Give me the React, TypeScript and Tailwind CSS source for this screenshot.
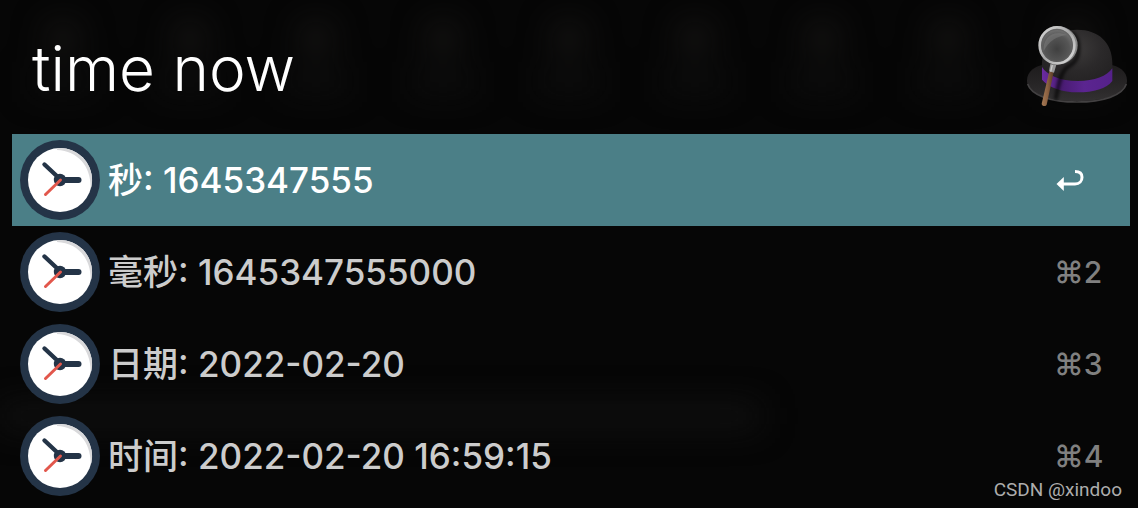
import { useState } from "react";
import clsx from "clsx";

const results = [
  { label: "秒", value: "1645347555", shortcut: "" },
  { label: "毫秒", value: "1645347555000", shortcut: "⌘2" },
  { label: "日期", value: "2022-02-20", shortcut: "⌘3" },
  { label: "时间", value: "2022-02-20 16:59:15", shortcut: "⌘4" },
];

function ClockIcon() {
  return (
    <svg aria-hidden="true" className="size-20 shrink-0" viewBox="0 0 80 80">
      <circle cx="40" cy="40" fill="#243447" r="40" />
      <circle cx="40" cy="40" fill="#fff" r="32" />
      <path d="M37 8.200A32 32 0 0 1 70.500 50C72 28 59 11 37 10Z" fill="#d9d9db" />
      <circle cx="40" cy="40" fill="#243447" r="6.200" />
      <path d="M24.500 24.500 40 39" stroke="#243447" strokeLinecap="round" strokeWidth="4.400" />
      <path d="M40 40H58.500" stroke="#243447" strokeLinecap="round" strokeWidth="6" />
      <path d="M40.500 40 25.500 54.500" stroke="#e2574c" strokeLinecap="round" strokeWidth="3" />
    </svg>
  );
}

function HatIcon() {
  return (
    <svg aria-hidden="true" className="h-[110px] w-32 shrink-0" viewBox="0 0 384 330">
      <defs>
        <radialGradient cx="0.5" cy="0.3" id="crown" r="0.7">
          <stop offset="0" stopColor="#3c3a3a" />
          <stop offset="0.5" stopColor="#2b292a" />
          <stop offset="1" stopColor="#211f20" />
        </radialGradient>
        <linearGradient id="brim" x1="0" x2="0" y1="0" y2="1">
          <stop offset="0" stopColor="#1d1b1c" />
          <stop offset="0.7" stopColor="#2b292a" />
          <stop offset="1" stopColor="#333132" />
        </linearGradient>
        <linearGradient id="band" x1="0" x2="1" y1="0" y2="0">
          <stop offset="0" stopColor="#6b2ba0" />
          <stop offset="0.3" stopColor="#4a1c74" />
          <stop offset="0.6" stopColor="#5b2590" />
          <stop offset="1" stopColor="#55218a" />
        </linearGradient>
        <radialGradient cx="0.5" cy="0.6" id="lens" r="0.6">
          <stop offset="0" stopColor="#3f3f3f" />
          <stop offset="0.6" stopColor="#565656" />
          <stop offset="1" stopColor="#7b7b7b" />
        </radialGradient>
        <linearGradient id="rim" x1="0" x2="1" y1="0" y2="1">
          <stop offset="0" stopColor="#d8d8d8" />
          <stop offset="0.5" stopColor="#a8a8a8" />
          <stop offset="1" stopColor="#dedede" />
        </linearGradient>
        <linearGradient id="handle" x1="0" x2="1" y1="0" y2="0">
          <stop offset="0" stopColor="#a67a54" />
          <stop offset="0.5" stopColor="#8a6041" />
          <stop offset="1" stopColor="#573924" />
        </linearGradient>
        <filter height="140%" id="soft" width="140%" x="-20%" y="-20%">
          <feGaussianBlur stdDeviation="5" />
        </filter>
      </defs>
      <path
        d="M51 212C51 183 76 167 104 164H298C326 167 351 183 351 212C351 252 287 273 201 273S51 252 51 212Z"
        fill="url(#brim)"
      />
      <path
        d="M53 222C64 257 123 276 201 276S338 257 349 222"
        fill="none"
        stroke="#434142"
        strokeWidth="5"
      />
      <path
        d="M96 174C94 96 136 59 201 59C267 59 307 99 307 159V211C290 236 246 246 201 246S112 230 96 211Z"
        fill="url(#crown)"
      />
      <path
        d="M96 171C111 195 149 213 204 213C254 213 291 199 307 175V213C290 236 251 247 203 247C157 247 116 232 96 209Z"
        fill="url(#band)"
      />
      <path
        d="M183 68C213 86 214 146 180 166C155 179 149 205 137 269"
        fill="none"
        filter="url(#soft)"
        opacity="0.6"
        stroke="#000"
        strokeWidth="13"
      />
      <path d="M118 184 131 187 110 284C108 290 95 289 95 281Z" fill="url(#handle)" />
      <path d="M121 162 139 164 132 188 117 184Z" fill="#999" />
      <path d="M127 165 122 185" stroke="#ccc" strokeWidth="4" />
      <ellipse cx="145" cy="106" fill="#898989" rx="58" ry="57" />
      <ellipse cx="141" cy="106" fill="url(#lens)" rx="52" ry="54" stroke="url(#rim)" strokeWidth="8" />
      <ellipse cx="141" cy="106" fill="none" rx="46" ry="48" stroke="#5c5c5c" strokeWidth="2" />
      <path d="M101 124C98 80 130 59 170 75C144 77 115 93 101 124Z" fill="#8a8a8a" opacity="0.4" />
    </svg>
  );
}

function ReturnIcon() {
  return (
    <svg aria-label="Return" className="h-8 w-8" role="img" viewBox="0 0 32 32">
      <path
        d="M9 20H21C25.500 20 28 17 28 13.200C28 9.500 25.500 7.500 21 7.500"
        fill="none"
        stroke="#fff"
        strokeWidth="3"
      />
      <path d="M2.500 20 9.800 13V27Z" fill="#fff" />
    </svg>
  );
}

// Faint shapes of the desktop that show through the dark window
function Backdrop() {
  return (
    <div aria-hidden="true" className="pointer-events-none absolute inset-0 -z-10 overflow-hidden">
      <div className="absolute inset-x-0 top-5 flex justify-around blur-lg">
        {[0, 1, 2, 3, 4, 5, 6, 7, 8].map((n) => (
          <div className="flex flex-col items-center gap-4" key={n}>
            <div className="size-9 rounded-full bg-[#151413]" />
            <div className="h-5 w-16 bg-[#0e0e0e]" />
          </div>
        ))}
      </div>
      <div className="absolute bottom-20 left-0 h-6 w-8/12 bg-[#111111] blur-lg" />
    </div>
  );
}

export default function App() {
  const [query, setQuery] = useState("time now");
  const [selected, setSelected] = useState(0);

  return (
    <main className="relative isolate min-h-screen bg-[#060606] pb-1.5 font-['Inter','Noto_Sans_CJK_SC',sans-serif]">
      <Backdrop />
      <header className="flex items-start justify-between pt-2.5">
        <input
          aria-label="Search"
          className="h-[124px] min-w-0 flex-1 bg-transparent pb-2 pl-8 text-[62px] font-[350] text-white outline-none"
          onChange={(e) => setQuery(e.target.value)}
          spellCheck={false}
          type="text"
          value={query}
        />
        <HatIcon />
      </header>
      <ul className="ml-3 mr-2">
        {results.map((item, i) => (
          <li key={item.label}>
            <button
              className={clsx(
                "flex h-[92px] w-full items-center gap-2 pl-2 pr-7 text-left text-[35px] font-medium",
                i === selected ? "bg-[#4b7f87] text-white" : "text-[#cccccc]",
              )}
              onClick={() => setSelected(i)}
              type="button"
            >
              <ClockIcon />
              <span className="flex-1">
                {item.label}: {item.value}
              </span>
              <span className="w-12 text-[30px] text-[#808080]">{item.shortcut || <ReturnIcon />}</span>
            </button>
          </li>
        ))}
      </ul>
      <p className="absolute bottom-1 right-4 font-['Roboto',sans-serif] text-[19px] text-[#adadad]">CSDN @xindoo</p>
    </main>
  );
}
